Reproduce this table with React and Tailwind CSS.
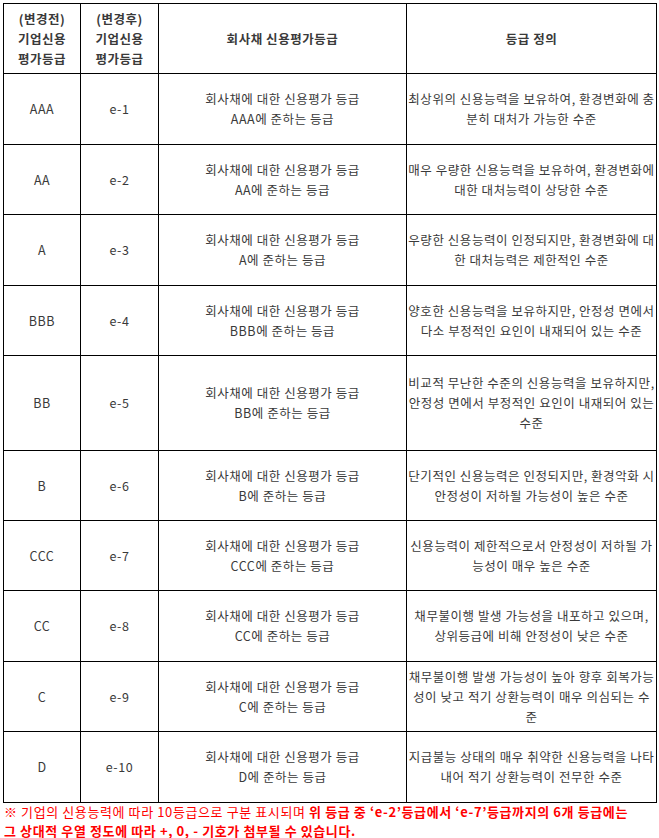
import React from "react";

const rows = [
  { a: "AAA", b: "e-1", h: 71, d: ["최상위의 신용능력을 보유하여, 환경변화에 충", "분히 대처가 가능한 수준"] },
  { a: "AA", b: "e-2", h: 70, d: ["매우 우량한 신용능력을 보유하여, 환경변화에", "대한 대처능력이 상당한 수준"] },
  { a: "A", b: "e-3", h: 71, d: ["우량한 신용능력이 인정되지만, 환경변화에 대", "한 대처능력은 제한적인 수준"] },
  { a: "BBB", b: "e-4", h: 70, d: ["양호한 신용능력을 보유하지만, 안정성 면에서", "다소 부정적인 요인이 내재되어 있는 수준"] },
  { a: "BB", b: "e-5", h: 95, d: ["비교적 무난한 수준의 신용능력을 보유하지만,", "안정성 면에서 부정적인 요인이 내재되어 있는", "수준"] },
  { a: "B", b: "e-6", h: 70, d: ["단기적인 신용능력은 인정되지만, 환경악화 시", "안정성이 저하될 가능성이 높은 수준"] },
  { a: "CCC", b: "e-7", h: 70, d: ["신용능력이 제한적으로서 안정성이 저하될 가", "능성이 매우 높은 수준"] },
  { a: "CC", b: "e-8", h: 71, d: ["채무불이행 발생 가능성을 내포하고 있으며,", "상위등급에 비해 안정성이 낮은 수준"] },
  { a: "C", b: "e-9", h: 70, d: ["채무불이행 발생 가능성이 높아 향후 회복가능", "성이 낮고 적기 상환능력이 매우 의심되는 수", "준"] },
  { a: "D", b: "e-10", h: 71, d: ["지급불능 상태의 매우 취약한 신용능력을 나타", "내어 적기 상환능력이 전무한 수준"] },
];

const font = { fontFamily: '"Noto Sans CJK KR", "Noto Sans", sans-serif' };

function Lines({ lines }) {
  return (
    <>
      {lines.map((l, i) => (
        <div key={i} className="whitespace-nowrap">{l}</div>
      ))}
    </>
  );
}

export default function App() {
  return (
    <div className="bg-white w-[659px] h-[838px] overflow-hidden pt-[3px] pl-[3px] text-[12.5px] leading-[20px] tracking-[0.55px] text-[#3a3a3a]" style={font}>
      <table className="border-collapse table-fixed w-[653px]">
        <colgroup>
          <col className="w-[77px]" />
          <col className="w-[78px]" />
          <col className="w-[248px]" />
          <col className="w-[250px]" />
        </colgroup>
        <thead>
          <tr className="h-[70px]">
            <th className="border border-black p-0 font-bold align-middle">
              <Lines lines={["(변경전)", "기업신용", "평가등급"]} />
            </th>
            <th className="border border-black p-0 font-bold align-middle">
              <Lines lines={["(변경후)", "기업신용", "평가등급"]} />
            </th>
            <th className="border border-black p-0 font-bold align-middle">회사채 신용평가등급</th>
            <th className="border border-black p-0 font-bold align-middle">등급 정의</th>
          </tr>
        </thead>
        <tbody>
          {rows.map((r) => (
            <tr key={r.a} style={{ height: r.h }}>
              <td className="border border-black p-0 text-center align-middle">{r.a}</td>
              <td className="border border-black p-0 text-center align-middle">{r.b}</td>
              <td className="border border-black p-0 text-center align-middle">
                <Lines lines={["회사채에 대한 신용평가 등급", `${r.a}에 준하는 등급`]} />
              </td>
              <td className="border border-black p-0 text-center align-middle">
                <div className="flex flex-col items-center">
                  <Lines lines={r.d} />
                </div>
              </td>
            </tr>
          ))}
        </tbody>
      </table>
      <div className="text-[#ff0000] text-[13px] leading-[17px] pl-[1px] tracking-[0.6px]">
        <div className="whitespace-nowrap">
          <span>※ 기업의 신용능력에 따라 10등급으로 구분 표시되며 </span>
          <span className="font-bold">위 등급 중 ‘e-2’등급에서 ‘e-7’등급까지의 6개 등급에는</span>
        </div>
        <div className="whitespace-nowrap font-bold mt-[2px]">그 상대적 우열 정도에 따라 +, 0, - 기호가 첨부될 수 있습니다.</div>
      </div>
    </div>
  );
}
